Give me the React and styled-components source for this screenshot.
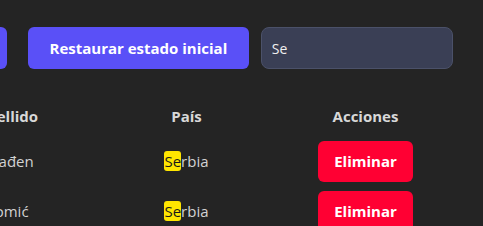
import React, { useState } from 'react'
import styled, { createGlobalStyle } from 'styled-components'

const GlobalStyle = createGlobalStyle`
  html, body {
    margin: 0;
    padding: 0;
    background: #242424;
    overflow: hidden;
  }
  body {
    font-family: "Open Sans", "Noto Sans", sans-serif;
    color: rgba(255, 255, 255, 0.87);
  }
`

const Page = styled.div`
  display: flex;
  flex-direction: column;
  margin-left: -120px;
  padding-top: 27px;
`

const Toolbar = styled.div`
  display: flex;
  align-items: center;
  gap: 12px;
  padding-left: 27px;
`

const Button = styled.button`
  height: ${p => (p.$danger ? '41px' : '42px')};
  padding: 0 ${p => (p.$danger ? '16px' : '21.5px')};
  border: none;
  border-radius: 6px;
  background: ${p => (p.$danger ? '#ff0033' : '#5a50f7')};
  color: #fff;
  font-family: inherit;
  font-size: 15px;
  font-weight: 700;
  cursor: pointer;
  white-space: nowrap;
`

const HiddenButton = styled(Button)`
  width: 100px;
  margin-right: 9px;
`

const SearchInput = styled.input`
  box-sizing: border-box;
  width: 192px;
  height: 42px;
  padding: 0 10px;
  border: 1px solid #4b5169;
  border-radius: 8px;
  background: #3a3f55;
  color: #f0f0f0;
  font-family: inherit;
  font-size: 14px;
  outline: none;
`

const Table = styled.div`
  display: grid;
  grid-template-columns: 179px 179px 179px;
  margin-left: 38px;
  margin-top: 26px;
`

const HeadCell = styled.div`
  height: 41px;
  display: flex;
  align-items: center;
  justify-content: center;
  font-size: 15px;
  font-weight: 700;
  color: #d8d8d8;
`

const Cell = styled.div`
  height: 50px;
  display: flex;
  align-items: center;
  justify-content: center;
  font-size: 15px;
  color: #d2d2d2;
`

const Mark = styled.mark`
  background: #ffe600;
  color: #1a1a1a;
  border-radius: 3px;
`

function Highlight({ text, query }) {
  if (!query) return text
  const i = text.toLowerCase().indexOf(query.toLowerCase())
  if (i < 0) return text
  return (
    <>
      {text.slice(0, i)}
      <Mark>{text.slice(i, i + query.length)}</Mark>
      {text.slice(i + query.length)}
    </>
  )
}

const initialRows = [
  { id: 1, apellido: 'Mlađen', pais: 'Serbia' },
  { id: 2, apellido: 'Tomić', pais: 'Serbia' },
]

export default function App() {
  const [rows, setRows] = useState(initialRows)
  const [query, setQuery] = useState('Se')

  return (
    <>
      <GlobalStyle />
      <Page>
        <Toolbar>
          <HiddenButton />
          <Button onClick={() => setRows(initialRows)}>Restaurar estado inicial</Button>
          <SearchInput value={query} onChange={e => setQuery(e.target.value)} />
        </Toolbar>
        <Table>
          <HeadCell>Apellido</HeadCell>
          <HeadCell>País</HeadCell>
          <HeadCell>Acciones</HeadCell>
          {rows.map(r => (
            <React.Fragment key={r.id}>
              <Cell>{r.apellido}</Cell>
              <Cell><Highlight text={r.pais} query={query} /></Cell>
              <Cell>
                <Button $danger onClick={() => setRows(rows.filter(x => x.id !== r.id))}>
                  Eliminar
                </Button>
              </Cell>
            </React.Fragment>
          ))}
        </Table>
      </Page>
    </>
  )
}
